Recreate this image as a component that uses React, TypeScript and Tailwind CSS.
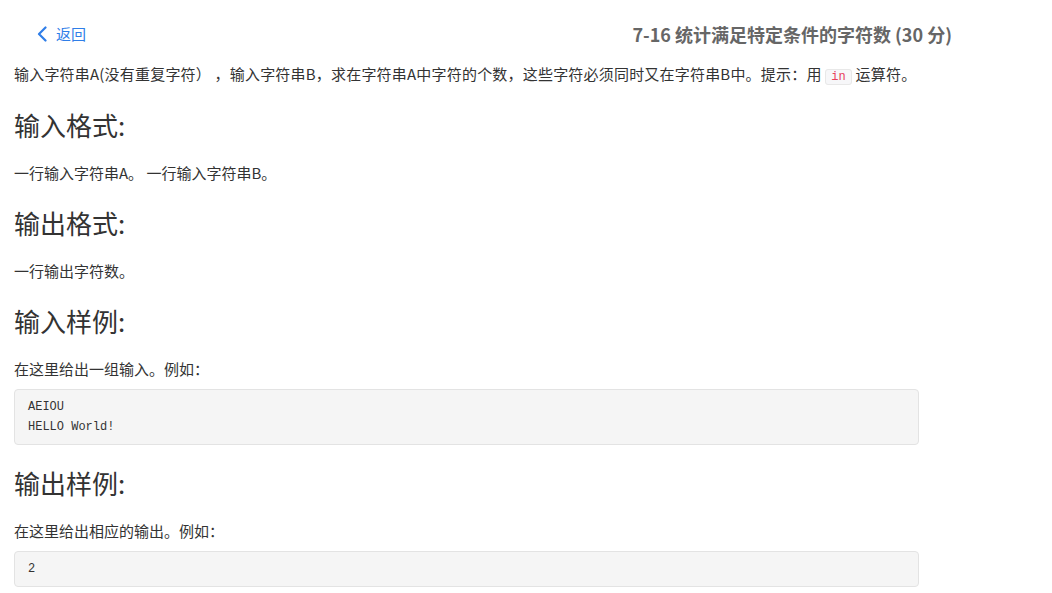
const Heading = ({ children }: { children: React.ReactNode }) => (
     <h2 className="mt-[20px] text-[26px] leading-[36px] font-normal text-[#333]">
          {children}
     </h2>
);

const Para = ({ children }: { children: React.ReactNode }) => (
     <p className="mt-[18px] text-[15px] leading-[24px] text-[#333]">{children}</p>
);

const CodeBlock = ({ lines }: { lines: string[] }) => (
     <pre className="mt-[8px] w-[905px] rounded-[4px] border border-[#e3e3e3] bg-[#f5f5f5] px-[13px] py-[7px] font-['Liberation_Mono',monospace] text-[12px] leading-[20px] text-[#333]">
          {lines.join('\n')}
     </pre>
);

export default function App() {
     return (
          <div className="min-h-[593px] bg-white font-['Noto_Sans_CJK_SC','Noto_Sans',sans-serif]">
               <div className="flex h-[68px] items-center justify-between pr-[100px] pl-[37px]">
                    <a className="flex items-center gap-[9px] text-[15px] text-[#2f7ee8]" href="#">
                         {/* back chevron */}
                         <svg width="10" height="16" viewBox="0 0 10 16" fill="none">
                              <path
                                   d="M8.5 1.5 2 8l6.5 6.5"
                                   stroke="currentColor"
                                   strokeWidth="2.2"
                                   strokeLinecap="round"
                                   strokeLinejoin="round"
                              />
                         </svg>
                         <span>返回</span>
                    </a>
                    <h1 className="text-[18px] font-bold text-[#666]">
                         7-16 统计满足特定条件的字符数 (30 分)
                    </h1>
               </div>
               <div className="px-[14px] pb-[8px]">
                    <p className="-mt-[6px] -mb-[2px] text-[15px] leading-[24px] tracking-[0.2px] text-[#333]">
                         输入字符串A(没有重复字符） ，输入字符串B，求在字符串A中字符的个数，这些字符必须同时又在字符串B中。提示：用{' '}
                         <code className="rounded-[3px] border border-[#e8e8e8] bg-[#f7f7f9] px-[5px] font-['Liberation_Mono',monospace] text-[12px] text-[#e83e5c]">
                              in
                         </code>{' '}
                         运算符。
                    </p>
                    <Heading>输入格式:</Heading>
                    <Para>一行输入字符串A。 一行输入字符串B。</Para>
                    <Heading>输出格式:</Heading>
                    <Para>一行输出字符数。</Para>
                    <Heading>输入样例:</Heading>
                    <Para>在这里给出一组输入。例如：</Para>
                    <CodeBlock lines={['AEIOU', 'HELLO World!']} />
                    <Heading>输出样例:</Heading>
                    <Para>在这里给出相应的输出。例如：</Para>
                    <CodeBlock lines={['2']} />
               </div>
          </div>
     );
}
